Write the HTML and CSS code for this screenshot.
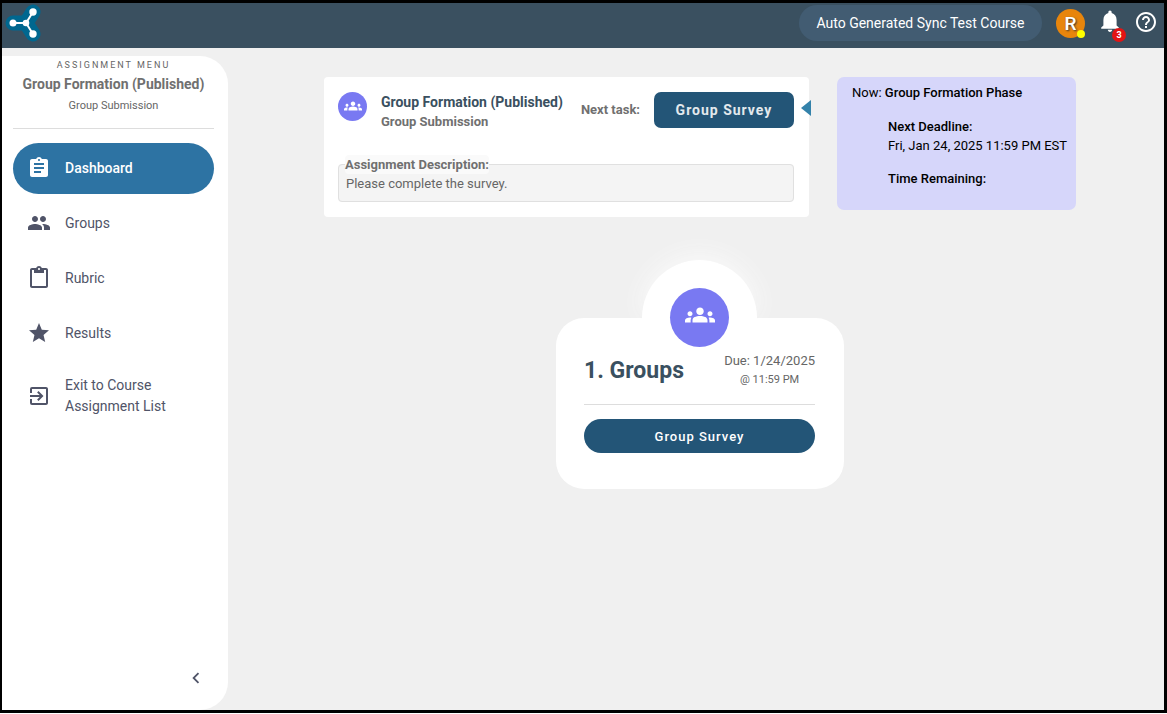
FILE: index.html
```html
<!DOCTYPE html>
<html lang="en">
<head>
<meta charset="utf-8">
<meta name="viewport" content="width=device-width, initial-scale=1">
<title>Group Formation (Published)</title>
<link rel="stylesheet" href="styles.css">
</head>
<body class="page">
<svg class="sprite" aria-hidden="true">
  <symbol id="groups" viewBox="0 0 24 24"><path d="M12 12.75c1.63 0 3.07.39 4.24.9 1.08.48 1.76 1.56 1.76 2.73V18H6v-1.61c0-1.18.68-2.26 1.76-2.73 1.17-.52 2.61-.91 4.24-.91zM4 13c1.1 0 2-.9 2-2s-.9-2-2-2-2 .9-2 2 .9 2 2 2zm1.130 1.100C4.760 14.040 4.390 14 4 14c-.99 0-1.930.21-2.780.58A2.010 2.010 0 0 0 0 16.430V18h4.500v-1.610c0-.83.23-1.610.63-2.290zM20 13c1.100 0 2-.9 2-2s-.9-2-2-2-2 .9-2 2 .9 2 2 2zm4 3.430c0-.81-.48-1.530-1.220-1.850A6.950 6.950 0 0 0 20 14c-.39 0-.76.04-1.130.1.4.68.63 1.460.63 2.290V18H24v-1.570zM12 6c1.660 0 3 1.340 3 3s-1.340 3-3 3-3-1.340-3-3 1.340-3 3-3z"/></symbol>
</svg>
<header class="topbar">
  <a class="logo" href="#" aria-label="Home">
    <svg width="36" height="40" viewBox="0 0 36 40">
      <g stroke="#00678f" stroke-width="15" stroke-linecap="round" stroke-linejoin="round" fill="#00678f"><path d="M8 20h13l7-11M21 20l7 11M8 20"/></g>
      <g stroke="#fff" stroke-width="2"><path d="M8 20h13l7-11M21 20l7 11" fill="none"/></g>
      <g fill="#fff"><circle cx="8" cy="20" r="3.5"/><circle cx="21" cy="20" r="3.3"/><circle cx="28" cy="9" r="3.7"/><circle cx="28" cy="31" r="3.7"/></g>
    </svg>
  </a>
  <a class="course" href="#">Auto Generated Sync Test Course</a>
  <button class="avatar" type="button" aria-label="Account">R<span class="status"></span></button>
  <button class="icon-button bell" type="button" aria-label="Notifications">
    <svg width="22" height="22" viewBox="2 2 20 20"><path d="M12 22c1.100 0 2-.9 2-2h-4c0 1.100.89 2 2 2zm6-6v-5c0-3.070-1.640-5.640-4.500-6.320V4c0-.83-.67-1.500-1.500-1.500s-1.500.67-1.500 1.500v.68C7.630 5.360 6 7.920 6 11v5l-2 2v1h16v-1l-2-2z"/></svg>
    <span class="badge">3</span>
  </button>
  <button class="icon-button" type="button" aria-label="Help">
    <svg width="24" height="24" viewBox="0 0 24 24"><path d="M11 18h2v-2h-2v2zm1-16C6.480 2 2 6.480 2 12s4.480 10 10 10 10-4.480 10-10S17.520 2 12 2zm0 18c-4.410 0-8-3.590-8-8s3.590-8 8-8 8 3.590 8 8-3.590 8-8 8zm0-14c-2.210 0-4 1.790-4 4h2c0-1.100.9-2 2-2s2 .9 2 2c0 2-3 1.750-3 5h2c0-2.250 3-2.500 3-5 0-2.210-1.790-4-4-4z"/></svg>
  </button>
</header>
<div class="body">
  <aside class="sidebar">
    <div class="menu-head">
      <div class="eyebrow">ASSIGNMENT MENU</div>
      <div class="menu-title">Group Formation (Published)</div>
      <div class="menu-sub">Group Submission</div>
    </div>
    <nav class="menu">
      <a class="item active" href="#"><svg width="24" height="24" viewBox="0 0 24 24"><path d="M19 3h-4.180C14.400 1.840 13.300 1 12 1c-1.300 0-2.400.84-2.820 2H5c-1.100 0-2 .9-2 2v14c0 1.100.9 2 2 2h14c1.100 0 2-.9 2-2V5c0-1.100-.9-2-2-2zm-7 0c.55 0 1 .45 1 1s-.45 1-1 1-1-.45-1-1 .45-1 1-1zm2 14H7v-2h7v2zm3-4H7v-2h10v2zm0-4H7V7h10v2z"/></svg>Dashboard</a>
      <a class="item" href="#"><svg width="24" height="24" viewBox="0 0 24 24"><path d="M16 11c1.660 0 2.990-1.340 2.990-3S17.660 5 16 5c-1.660 0-3 1.340-3 3s1.340 3 3 3zm-8 0c1.660 0 2.990-1.340 2.990-3S9.660 5 8 5C6.340 5 5 6.340 5 8s1.340 3 3 3zm0 2c-2.330 0-7 1.170-7 3.500V19h14v-2.500c0-2.330-4.670-3.500-7-3.500zm8 0c-.29 0-.62.02-.97.05 1.160.84 1.970 1.970 1.970 3.450V19h6v-2.500c0-2.330-4.670-3.500-7-3.500z"/></svg>Groups</a>
      <a class="item" href="#"><svg width="24" height="24" viewBox="0 0 24 24"><path d="M19 2h-4.180C14.400.84 13.300 0 12 0c-1.300 0-2.400.84-2.820 2H5c-1.100 0-2 .9-2 2v16c0 1.100.9 2 2 2h14c1.100 0 2-.9 2-2V4c0-1.100-.9-2-2-2zm-7 0c.55 0 1 .45 1 1s-.45 1-1 1-1-.45-1-1 .45-1 1-1zm7 18H5V4h2v3h10V4h2v16z"/></svg>Rubric</a>
      <a class="item" href="#"><svg width="24" height="24" viewBox="0 0 24 24"><path d="M12 17.270 18.180 21l-1.640-7.030L22 9.240l-7.190-.61L12 2 9.190 8.630 2 9.240l5.460 4.730L5.820 21z"/></svg>Results</a>
      <a class="item exit" href="#"><svg width="24" height="24" viewBox="0 0 24 24"><path d="M10.090 15.590 11.500 17l5-5-5-5-1.410 1.410L12.670 11H3v2h9.670l-2.580 2.590zM19 3H5a2 2 0 0 0-2 2v4h2V5h14v14H5v-4H3v4a2 2 0 0 0 2 2h14c1.100 0 2-.9 2-2V5c0-1.100-.9-2-2-2z"/></svg><span>Exit to Course<br>Assignment List</span></a>
    </nav>
    <button class="collapse" type="button" aria-label="Collapse menu"><svg width="22" height="22" viewBox="0 0 24 24"><path d="M15.410 7.410 14 6l-6 6 6 6 1.410-1.410L10.830 12z"/></svg></button>
  </aside>
  <main class="main">
    <div class="overview">
      <section class="summary">
        <div class="summary-top">
          <span class="dot"><svg width="18" height="18"><use href="#groups"/></svg></span>
          <div class="names">
            <h1 class="name">Group Formation (Published)</h1>
            <div class="kind">Group Submission</div>
          </div>
          <span class="next">Next task:</span>
          <button class="task" type="button">Group Survey</button>
          <span class="pointer"></span>
        </div>
        <fieldset class="description">
          <legend class="legend">Assignment Description:</legend>
          Please complete the survey.
        </fieldset>
      </section>
      <section class="phase">
        <p class="now">Now: <b>Group Formation Phase</b></p>
        <div class="deadline"><b>Next Deadline:</b><br>Fri, Jan 24, 2025 11:59 PM EST</div>
        <div class="deadline"><b>Time Remaining:</b></div>
      </section>
    </div>
    <section class="step">
      <div class="halo"><span class="disc"><svg width="30" height="30"><use href="#groups"/></svg></span></div>
      <div class="step-head">
        <h2 class="step-title">1. Groups</h2>
        <div class="due">Due: 1/24/2025<div class="time">@ 11:59 PM</div></div>
      </div>
      <button class="survey" type="button">Group Survey</button>
    </section>
  </main>
</div>
</body>
</html>
```
FILE: styles.css
```css
* { box-sizing: border-box; }

html { background: #fff; }

.page {
  display: flex;
  flex-direction: column;
  min-height: calc(100vh - 1px);
  margin: 0;
  border: solid #000;
  border-width: 3px 3px 3px 2px;
  background: #f0f0f0;
  font: 13px/19px Roboto, sans-serif;
  color: #666;
}

.sprite { position: absolute; width: 0; height: 0; }
svg { display: block; flex: none; fill: currentColor; }
button { font-family: inherit; border: 0; padding: 0; cursor: pointer; }
a { color: inherit; text-decoration: none; }

.topbar {
  display: flex;
  align-items: flex-start;
  height: 45px;
  padding: 2px 6px 0 3px;
  background: #3a5060;
  color: #fff;
}
.logo { margin-right: auto; margin-top: -2px; }
.course {
  min-width: 243px;
  padding: 0 14px;
  border-radius: 18px;
  background: #425c72;
  font-size: 14px;
  line-height: 36px;
  text-align: center;
}
.avatar {
  position: relative;
  width: 29px;
  height: 29px;
  margin: 4px 14px 0;
  border-radius: 50%;
  background: #e8850c;
  color: #fff;
  font-size: 19px;
  font-weight: 500;
  line-height: 29px;
  text-shadow: 1px 1px 2px #333;
}
.status {
  position: absolute;
  right: 0;
  bottom: 0;
  width: 8px;
  height: 8px;
  border-radius: 50%;
  background: #ff0;
}
.icon-button { position: relative; margin-top: 5px; background: none; color: #fff; }
.bell { margin-right: 13px; }
.badge {
  position: absolute;
  left: 13px;
  top: 18px;
  width: 14px;
  height: 14px;
  border-radius: 50%;
  background: #e31414;
  font-size: 9px;
  font-weight: 700;
  line-height: 14px;
}

.body { display: flex; flex: 1; }

.sidebar {
  display: flex;
  flex-direction: column;
  width: 226px;
  margin-top: 8px;
  padding: 0 14px 21px 11px;
  border-radius: 0 28px 28px 0;
  background: #fff;
}
.menu-head {
  padding-bottom: 12px;
  border-bottom: 1px solid #ddd;
  text-align: center;
}
.eyebrow { font-size: 9px; line-height: 18px; letter-spacing: 2px; }
.menu-title { font-size: 14px; line-height: 21px; font-weight: 700; color: #707070; white-space: nowrap; }
.menu-sub { font-size: 11px; line-height: 21px; }
.menu { display: flex; flex-direction: column; gap: 4px; margin-top: 14px; }
.item {
  display: flex;
  align-items: center;
  gap: 14px;
  min-height: 51px;
  padding: 4px 14px;
  border-radius: 26px;
  color: #505468;
  font-size: 14px;
  line-height: 21px;
}
.item svg { margin-bottom: 2px; }
.active { background: #2d73a3; color: #fff; font-weight: 500; }
.exit { padding-top: 12px; padding-bottom: 12px; }
.exit svg { margin-bottom: 0; }
.collapse { align-self: flex-end; margin: auto 7px 0 0; background: none; color: #505468; }

.main { flex: 1; padding: 29px 0 0 8px; }

.overview {
  display: flex;
  justify-content: center;
  align-items: flex-start;
  gap: 28px;
}
.summary {
  width: 485px;
  padding: 15px 15px 15px 14px;
  border-radius: 4px;
  background: #fff;
}
.summary-top { position: relative; display: flex; align-items: flex-start; }
.dot, .disc { display: grid; place-items: center; border-radius: 50%; background: #7979f2; color: #fff; }
.dot { width: 29px; height: 29px; margin-right: 14px; }
.dot svg { margin-bottom: 2px; }
.names { margin-right: auto; }
.name { margin: 0; font-size: 14px; line-height: 20px; font-weight: 700; color: #3a5060; }
.kind, .next, .legend { font-weight: 700; color: #707070; }
.next { margin-right: 14px; line-height: 36px; }
.task {
  width: 140px;
  height: 36px;
  border-radius: 7px;
  background: #235577;
  color: #e3e9ed;
  font-size: 14px;
  font-weight: 700;
  letter-spacing: 1px;
}
.pointer {
  position: absolute;
  right: -17px;
  top: 8px;
  border: solid transparent;
  border-width: 8px 10px 8px 0;
  border-right-color: #3482aa;
}
.description {
  margin: 24px 0 0;
  padding: 0 7px 8px;
  border: 1px solid #e0e0e0;
  border-radius: 4px;
  background: #f4f4f4;
}
.legend { padding: 0; margin-left: -1px; background: #fafafa; border-radius: 4px; }
.phase {
  width: 239px;
  padding: 6px 8px 22px 15px;
  border-radius: 7px;
  background: #d6d6fa;
  color: #000;
}
.phase b { font-weight: 500; }
.now { margin: 0 0 15px; }
.deadline { margin: 0 0 14px 36px; white-space: nowrap; }
.deadline:last-child { margin-bottom: 0; }

.step {
  position: relative;
  z-index: 0;
  width: 288px;
  margin: 101px auto 0;
  padding: 28px 29px 36px 28px;
  border-radius: 28px;
  background: #fff;
}
.halo {
  position: absolute;
  left: 86px;
  top: -58px;
  display: grid;
  place-items: center;
  width: 115px;
  height: 115px;
  border-radius: 50%;
  background: #fff;
}
.halo::before {
  content: "";
  position: absolute;
  inset: 0 0 50%;
  z-index: -1;
  border-radius: 58px 58px 0 0;
  box-shadow: 0 -4px 24px #fafafa;
}
.disc { width: 59px; height: 59px; }
.disc svg { margin-bottom: 6px; }
.step-head {
  position: relative;
  display: flex;
  justify-content: space-between;
  align-items: flex-end;
  padding: 5px 0 14px;
  border-bottom: 1px solid #ddd;
}
.step-title { margin: 0; font-size: 23px; line-height: 38px; font-weight: 700; color: #3a5060; }
.due { text-align: center; }
.time { font-size: 11px; line-height: 20px; }
.survey {
  display: block;
  width: 100%;
  height: 34px;
  margin-top: 14px;
  border-radius: 17px;
  background: #235577;
  color: #fff;
  font-size: 13px;
  font-weight: 500;
  letter-spacing: 1px;
}
```
